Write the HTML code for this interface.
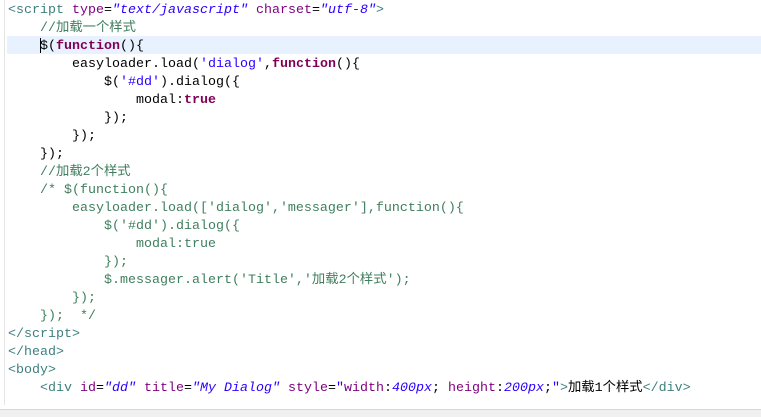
<!DOCTYPE html>
<html><head><meta charset="utf-8"><style>
html,body{margin:0;padding:0;background:#fff;width:761px;height:417px;overflow:hidden;position:relative}
pre{margin:0;position:absolute;left:8px;top:2px;font-family:"Liberation Mono","Noto Sans CJK SC",monospace;font-size:13.33px;line-height:18px;color:#000;white-space:pre}
.t{color:#3f7f7f}.a{color:#7f007f}.v{color:#2a00ff;font-style:italic}.c{color:#3f7f5f}.k{color:#7f0055;font-weight:bold}.s{color:#2a00ff}
.hl{position:absolute;left:7px;top:36px;width:754px;height:18px;background:#e8f2fe}
.gut{position:absolute;left:4px;top:0;width:1px;height:405px;background:#e4e4e4}
.sb{position:absolute;left:0;top:409px;width:761px;height:8px;background:#f0f0f0;border-top:1px solid #d8d8d8}
.cur{position:absolute;left:40px;top:38px;width:1px;height:15px;background:#000}
</style></head><body>
<div class="gut"></div><div class="hl"></div>
<pre><span class="t">&lt;script</span> <span class="a">type</span>=<span class="v">"text/javascript"</span> <span class="a">charset</span>=<span class="v">"utf-8"</span><span class="t">&gt;</span>
    <span class="c">//加载一个样式</span>
    $(<span class="k">function</span>(){
        easyloader.load(<span class="s">'dialog'</span>,<span class="k">function</span>(){
            $(<span class="s">'#dd'</span>).dialog({
                modal:<span class="k">true</span>
            });
        });
    });
    <span class="c">//加载2个样式</span>
<span class="c">    /* $(function(){
        easyloader.load(['dialog','messager'],function(){
            $('#dd').dialog({
                modal:true
            });
            $.messager.alert('Title','加载2个样式');
        });
    });  */</span>
<span class="t">&lt;/script&gt;</span>
<span class="t">&lt;/head&gt;</span>
<span class="t">&lt;body&gt;</span>
    <span class="t">&lt;div</span> <span class="a">id</span>=<span class="v">"dd"</span> <span class="a">title</span>=<span class="v">"My Dialog"</span> <span class="a">style</span>=<span class="s">"</span><span class="a">width</span>:<span class="v">400px</span>; <span class="a">height</span>:<span class="v">200px</span>;<span class="s">"</span><span class="t">&gt;</span>加载1个样式<span class="t">&lt;/div&gt;</span></pre>
<div class="cur"></div>
<div class="sb"></div>
</body></html>
